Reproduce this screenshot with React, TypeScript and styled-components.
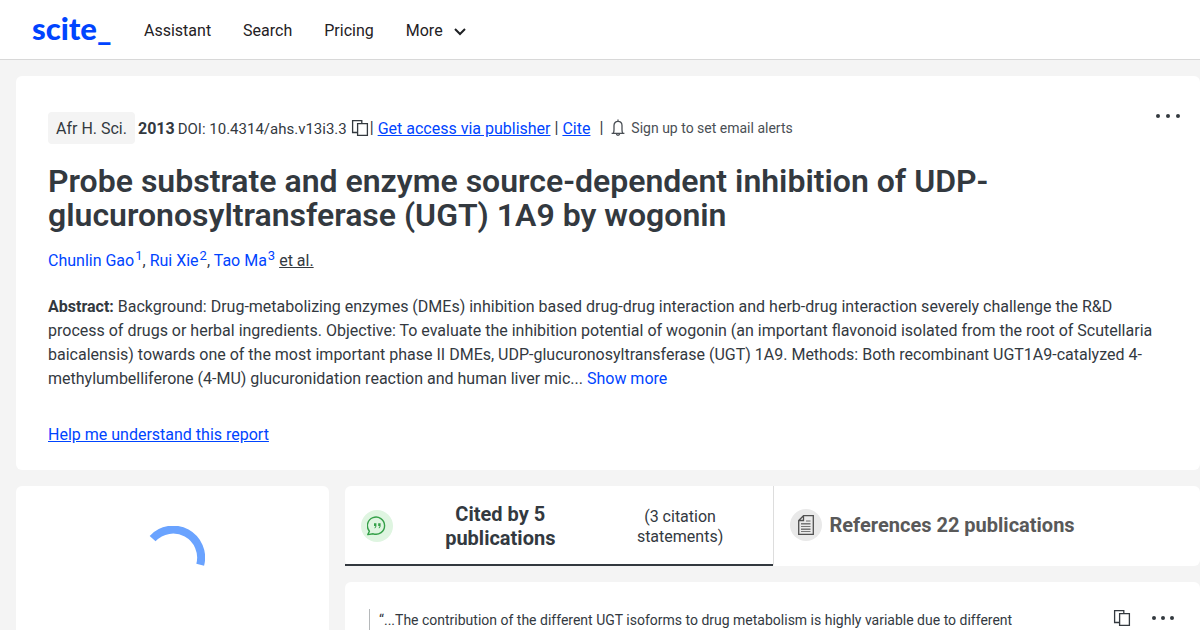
import React from "react";
import styled, { createGlobalStyle } from "styled-components";

const GlobalStyle = createGlobalStyle`
  *, *::before, *::after { box-sizing: border-box; }
  html { background: #f4f4f4; }
  body {
    margin: 0;
    overflow-x: hidden;
    background: #f4f4f4;
    color: #33393f;
    font-family: Roboto, "Liberation Sans", sans-serif;
    font-size: 16px;
    line-height: 24px;
  }
  h1, p, blockquote { margin: 0; }
  a { color: #0044ff; }
  button {
    padding: 0;
    border: 0;
    background: none;
    color: inherit;
    font: inherit;
    cursor: pointer;
  }
  svg { display: block; flex: none; }
`;

const Header = styled.header`
  display: flex;
  align-items: center;
  gap: 32px;
  height: 60px;
  padding: 0 32px;
  background: #fff;
  border-bottom: 1px solid #d8d8d8;
`;

const Logo = styled.a`
  width: 80px;
  color: #0044ff;
  font-family: Lato, sans-serif;
  font-size: 31px;
  font-weight: 900;
  line-height: 32px;
  padding-bottom: 4px;
  text-decoration: none;
`;

const Nav = styled.nav`
  display: flex;
  align-items: center;
  gap: 32px;
  padding-top: 2px;
`;

const NavLink = styled.a`
  color: #1f2124;
  text-decoration: none;
`;

const NavButton = styled.button`
  display: flex;
  align-items: center;
  gap: 10px;
  && { color: #1f2124; }
`;

const Main = styled.main`
  display: grid;
  grid-template-columns: 313px minmax(0, 1fr);
  gap: 16px;
  padding: 16px 0 0 16px;
`;

const Card = styled.section`
  background: #fff;
  border-radius: 6px;
`;

const PaperCard = styled(Card)`
  grid-column: 1 / -1;
  padding: 24px 16px 23px 32px;
`;

const MetaRow = styled.div`
  display: flex;
  align-items: flex-start;
  justify-content: space-between;
`;

const Meta = styled.div`
  display: flex;
  align-items: center;
  gap: 3px;
  padding-top: 12px;
  white-space: nowrap;
`;

const Journal = styled.span`
  padding: 5px 8px 3px;
  background: #f4f4f4;
  border-radius: 4px;
`;

const Year = styled.strong`
  padding-top: 2px;
`;

const Doi = styled.span`
  padding-top: 2px;
  font-size: 15px;
`;

const CopyDoi = styled.button`
  && { margin: 0 -3px 0 1px; }
`;

const Separator = styled.span<{ $wide?: boolean }>`
  margin: 0 1px 0 ${(p) => (p.$wide ? "6px" : "1px")};
`;

const MetaLink = styled.a`
  padding-top: 2px;
`;

const AlertButton = styled.button`
  display: flex;
  align-items: center;
  gap: 6px;
  && {
    padding-left: 4px;
    color: #4a4f55;
    font-size: 14px;
  }
`;

const MenuButton = styled.button`
  display: grid;
  place-items: center;
  width: 32px;
  height: 32px;
`;

const Title = styled.h1`
  max-width: 1000px;
  margin-top: 20px;
  font-size: 32px;
  font-weight: 600;
  line-height: 34px;
`;

const Authors = styled.p`
  margin-top: 17px;
  sup { margin-left: 1px; font-size: 13px; line-height: 0; }
`;

const Author = styled.a`
  text-decoration: none;
`;

const MoreAuthors = styled.button`
  && { text-decoration: underline; }
`;

const Abstract = styled.p`
  margin-top: 22px;
  padding-right: 24px;
`;

const ShowMore = styled.button`
  && { color: #0044ff; }
`;

const Help = styled.p`
  margin-top: 32px;
`;

const FilterCard = styled(Card)`
  display: flex;
  justify-content: center;
  padding-top: 40px;
`;

const Column = styled.div`
  display: flex;
  flex-direction: column;
  gap: 16px;
`;

const Tabs = styled(Card)`
  display: grid;
  grid-template-columns: 1fr 1fr;
  min-height: 80px;
`;

const Tab = styled.button<{ $active?: boolean }>`
  display: flex;
  align-items: center;
  gap: 8px;
  && {
    padding: 0 16px;
    border-bottom: ${(p) => (p.$active ? "0" : "2px solid transparent")};
    border-left: ${(p) => (p.$active ? "0" : "1px solid #dddddd")};
    box-shadow: ${(p) => (p.$active ? "inset 0 -2px #33393f" : "none")};
    color: ${(p) => (p.$active ? "#33393f" : "#595959")};
  }
`;

const IconDisc = styled.span<{ $tint: string }>`
  display: grid;
  flex: none;
  place-items: center;
  width: 32px;
  height: 32px;
  border-radius: 50%;
  background: ${(p) => p.$tint};
`;

const TabLabel = styled.strong<{ $wide?: boolean }>`
  flex: ${(p) => (p.$wide ? "4 1 0" : "none")};
  padding: ${(p) => (p.$wide ? "0 32px" : "0")};
  font-size: 20px;
  line-height: 24px;
`;

const TabNote = styled.span`
  flex: 3 1 0;
  padding: 2px 26px 0 22px;
  line-height: 20px;
`;

const Statement = styled(Card)`
  display: flex;
  align-items: flex-start;
  justify-content: space-between;
  padding: 27px 21px 24px 24px;
`;

const Quote = styled.blockquote`
  padding-left: 9px;
  border-left: 1px solid #b5b8ba;
  font-size: 14px;
  line-height: 22px;
`;

const Actions = styled.div`
  display: flex;
  align-items: center;
  gap: 16px;
`;

const CopyIcon = () => (
  <svg width="18" height="18" viewBox="0 0 18 18" fill="none" stroke="currentColor" strokeWidth="1.3">
    <path d="M6.5 13.5H1.6V1.6h9.2v3" />
    <path d="M6.6 4.6h9.8v11.8H6.6z" />
  </svg>
);

const BellIcon = () => (
  <svg width="14" height="18" viewBox="0 0 14 18" fill="none" stroke="currentColor" strokeWidth="1.3">
    <path d="M7 .4v1.8M.6 14.3h12.8M2.3 14.2c.6-1 .7-2 .7-3.4V6.6C3 4 4.6 2.3 7 2.3s4 1.7 4 4.3v4.2c0 1.4.1 2.4.7 3.4M5.4 14.6c0 2.4 3.2 2.4 3.2 0" />
  </svg>
);

const Dots = ({ gap }: { gap: number }) => (
  <svg width="32" height="8" viewBox="0 0 32 8" fill="#33393f">
    <circle cx={16 - gap} cy="4" r="2" />
    <circle cx="16" cy="4" r="2" />
    <circle cx={16 + gap} cy="4" r="2" />
  </svg>
);

const Chevron = () => (
  <svg width="14" height="14" viewBox="0 0 14 14" fill="none" stroke="currentColor" strokeWidth="2">
    <path d="M2 5l5 5 5-5" />
  </svg>
);

const CitationIcon = () => (
  <svg width="20" height="20" viewBox="0 0 20 20" fill="none" stroke="#34a048" strokeWidth="1.4">
    <path d="M.8 18.6l1.6-3.4a8.6 8.6 0 1 1 3.8 2.6z" strokeLinejoin="round" />
    <path
      d="M7 7.2h2.4v2.6c0 1.3-.6 2.1-1.8 2.6v-1c.5-.3.8-.7.8-1.300H7zM11.200 7.200h2.400v2.600c0 1.300-.6 2.100-1.800 2.600v-1c.5-.3.8-.7.8-1.300h-1.400z"
      fill="#34a048"
      stroke="none"
    />
  </svg>
);

const DocumentIcon = () => (
  <svg width="16" height="20" viewBox="0 0 16 20" fill="none" stroke="#505050">
    <path d="M5.5.7h9.8v18.6H.7V5.5zM5.5.7v4.8H.7" strokeWidth="1.3" />
    <path d="M8 5.5h4.5M8 6.5h4.5M3 9.5h9.5M3 13.5h9.5" stroke="#aaaaaa" strokeWidth="1" />
    <path d="M3 8.5h9.5M3 11.5h9.5M3 14.5h9.5M3 16.5h9.5" stroke="#777777" strokeWidth="1" />
  </svg>
);

const Spinner = () => (
  <svg width="64" height="64" viewBox="0 0 64 64" fill="none" stroke="#6aa3ff" strokeWidth="8">
    <path d="M11.6 12.6A28 28 0 0 1 59.2 38.8" />
  </svg>
);

export default function App() {
  return (
    <>
      <GlobalStyle />
      <Header>
        <Logo href="#">scite_</Logo>
        <Nav>
          <NavLink href="#">Assistant</NavLink>
          <NavLink href="#">Search</NavLink>
          <NavLink href="#">Pricing</NavLink>
          <NavButton type="button">More <Chevron /></NavButton>
        </Nav>
      </Header>
      <Main>
        <PaperCard>
          <MetaRow>
            <Meta>
              <Journal>Afr H. Sci.</Journal>
              <Year>2013</Year>
              <Doi>DOI: 10.4314/ahs.v13i3.3</Doi>
              <CopyDoi type="button" aria-label="Copy DOI"><CopyIcon /></CopyDoi>
              <Separator>|</Separator>
              <MetaLink href="#">Get access via publisher</MetaLink>
              <Separator>|</Separator>
              <MetaLink href="#">Cite</MetaLink>
              <Separator $wide>|</Separator>
              <AlertButton type="button"><BellIcon />Sign up to set email alerts</AlertButton>
            </Meta>
            <MenuButton type="button" aria-label="Paper options"><Dots gap={10} /></MenuButton>
          </MetaRow>
          <Title>
            Probe substrate and enzyme source-dependent inhibition of UDP-glucuronosyltransferase (UGT) 1A9 by wogonin
          </Title>
          <Authors>
            <Author href="#">Chunlin Gao<sup>1</sup></Author>, <Author href="#">Rui Xie<sup>2</sup></Author>,{" "}
            <Author href="#">Tao Ma<sup>3</sup></Author> <MoreAuthors type="button">et al.</MoreAuthors>
          </Authors>
          <Abstract>
            <strong>Abstract:</strong> Background: Drug-metabolizing enzymes (DMEs) inhibition based drug-drug
            interaction and herb-drug interaction severely challenge the R&amp;D process of drugs or herbal
            ingredients. Objective: To evaluate the inhibition potential of wogonin (an important flavonoid isolated
            from the root of Scutellaria baicalensis) towards one of the most important phase II DMEs,
            UDP-glucuronosyltransferase (UGT) 1A9. Methods: Both recombinant UGT1A9-catalyzed
            4-methylumbelliferone (4-MU) glucuronidation reaction and human liver mic...{" "}
            <ShowMore type="button">Show more</ShowMore>
          </Abstract>
          <Help><a href="#">Help me understand this report</a></Help>
        </PaperCard>
        <FilterCard aria-label="Loading"><Spinner /></FilterCard>
        <Column>
          <Tabs>
            <Tab type="button" $active>
              <IconDisc $tint="#dff5e1"><CitationIcon /></IconDisc>
              <TabLabel $wide>Cited by 5 publications</TabLabel>
              <TabNote>(3 citation statements)</TabNote>
            </Tab>
            <Tab type="button">
              <IconDisc $tint="#e9e9e9"><DocumentIcon /></IconDisc>
              <TabLabel>References 22 publications</TabLabel>
            </Tab>
          </Tabs>
          <Statement>
            <Quote>“...The contribution of the different UGT isoforms to drug metabolism is highly variable due to different</Quote>
            <Actions>
              <button type="button" aria-label="Copy statement"><CopyIcon /></button>
              <button type="button" aria-label="Statement options"><Dots gap={9} /></button>
            </Actions>
          </Statement>
        </Column>
      </Main>
    </>
  );
}
